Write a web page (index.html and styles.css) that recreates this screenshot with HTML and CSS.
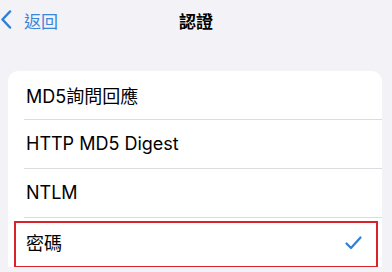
FILE: index.html
```html
<!DOCTYPE html>
<html lang="zh-Hant">
<head>
<meta charset="utf-8">
<link rel="stylesheet" href="styles.css">
</head>
<body>
<div class="nav">
  <div class="back">
    <svg class="chev" width="12" height="19" viewBox="0 0 12 19"><path d="M10 1.5 L2.5 9.5 L10 17.5" fill="none" stroke="#2f7fd6" stroke-width="2.5" stroke-linecap="round" stroke-linejoin="round"/></svg>
    <span class="back-text">返回</span>
  </div>
  <div class="title">認證</div>
</div>
<div class="card">
  <div class="row"><span class="label">MD5詢問回應</span></div>
  <div class="row"><span class="label">HTTP MD5 Digest</span></div>
  <div class="row"><span class="label">NTLM</span></div>
  <div class="row last selected">
    <span class="label">密碼</span>
    <svg class="check" width="17" height="14" viewBox="0 0 17 14"><path d="M1.5 7.5 L6 12 L15.5 1.5" fill="none" stroke="#2f7fd6" stroke-width="2.2" stroke-linecap="round" stroke-linejoin="round"/></svg>
    <div class="highlight"></div>
  </div>
</div>
</body>
</html>
```
FILE: styles.css
```css
html, body {
  margin: 0;
  padding: 0;
  background: #f2f2f7;
  font-family: Inter, "Noto Sans CJK TC", sans-serif;
  color: #000;
}
.nav {
  position: relative;
  height: 40px;
  display: flex;
  align-items: center;
  justify-content: center;
}
.back {
  position: absolute;
  left: 0;
  top: 0;
  height: 40px;
  display: flex;
  align-items: center;
}
.chev {
  margin-top: -1px;
}
.back-text {
  margin-left: 12px;
  font-size: 17px;
  color: #3a86d8;
  font-family: "Noto Sans CJK TC", sans-serif;
}
.title {
  font-size: 17px;
  font-weight: 700;
  font-family: "Noto Sans CJK TC", sans-serif;
}
.card {
  margin: 31px 10px 0 8px;
  background: #fff;
  border-radius: 10px 10px 0 0;
}
.row {
  position: relative;
  height: 49px;
  display: flex;
  align-items: center;
  justify-content: space-between;
  padding: 0 20px 0 18px;
}
.row::after {
  content: "";
  position: absolute;
  left: 16px;
  right: 0;
  bottom: 0;
  height: 1px;
  background: #dcdce0;
}
.row.last::after {
  display: none;
}
.label {
  font-size: 18px;
  margin-top: -2px;
}
.highlight {
  position: absolute;
  left: 6px;
  right: 4px;
  top: 3px;
  height: 47px;
  border: 2px solid #d9232b;
  box-sizing: border-box;
}
```
